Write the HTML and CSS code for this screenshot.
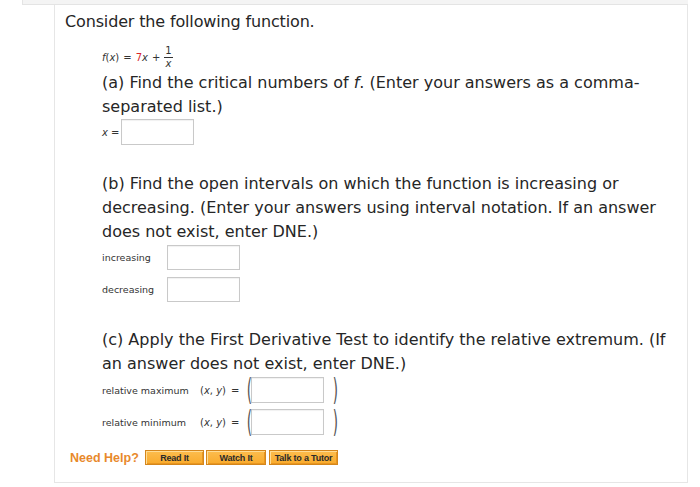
FILE: index.html
```html
<!DOCTYPE html>
<html>
<head>
<meta charset="utf-8">
<link rel="stylesheet" href="styles.css">
</head>
<body>
<div class="prev-strip"></div>
<div class="panel">
  <div class="intro">Consider the following function.</div>
  <div class="sub formula"><span class="it">f</span>(<span class="it">x</span>)<span class="op">=</span><span class="red">7</span><span class="it">x</span><span class="op">+</span><span class="frac"><span class="num">1</span><span class="den it">x</span></span></div>
  <p class="sub q q-a">(a) Find the critical numbers of <span class="it">f</span>. (Enter your answers as a comma-<br>separated list.)</p>
  <div class="sub row">
    <span class="var"><span class="it">x</span> =</span>
    <span class="box"></span>
  </div>

  <p class="sub q q-b">(b) Find the open intervals on which the function is increasing or<br>decreasing. (Enter your answers using interval notation. If an answer<br>does not exist, enter DNE.)</p>
  <div class="sub row row-inc">
    <span class="lbl lbl-int">increasing</span>
    <span class="box box-int"></span>
  </div>
  <div class="sub row row-dec">
    <span class="lbl lbl-int">decreasing</span>
    <span class="box box-int"></span>
  </div>

  <p class="sub q q-c">(c) Apply the First Derivative Test to identify the relative extremum. (If<br>an answer does not exist, enter DNE.)</p>
  <div class="sub row row-max">
    <span class="lbl lbl-ext">relative maximum</span>
    <span class="xy">(<span class="it">x</span>, <span class="it">y</span>)<span class="eq">=</span></span>
    <span class="paren">(</span>
    <span class="box box-ext"></span>
    <span class="paren paren-r">)</span>
  </div>
  <div class="sub row row-min">
    <span class="lbl lbl-ext">relative minimum</span>
    <span class="xy">(<span class="it">x</span>, <span class="it">y</span>)<span class="eq">=</span></span>
    <span class="paren">(</span>
    <span class="box box-ext"></span>
    <span class="paren paren-r">)</span>
  </div>

  <div class="help">
    <span class="need">Need Help?</span>
    <span class="btn btn-read">Read It</span>
    <span class="btn btn-watch">Watch It</span>
    <span class="btn btn-tutor">Talk to a Tutor</span>
  </div>
</div>
</body>
</html>
```

FILE: styles.css
```css
html, body {
  margin: 0;
  padding: 0;
  background: #ffffff;
}
body {
  font-family: "DejaVu Sans", Verdana, sans-serif;
  color: #262626;
}
.prev-strip {
  margin-left: 22px;
  width: 665px;
  height: 4px;
  background: #f4f4f4;
  border-left: 1px solid #e4e4e4;
  border-bottom: 1px solid #e4e4e4;
}
.panel {
  margin-left: 54px;
  width: 622px;
  border-left: 1px solid #e6e6e6;
  border-right: 1px solid #e6e6e6;
  border-bottom: 1px solid #e6e6e6;
  padding: 5px 0 17px 10px;
}
.intro {
  font-size: 16px;
  line-height: 24px;
  letter-spacing: -0.15px;
}
.sub {
  margin-left: 37px;
}
.it { font-style: italic; }
.red { color: #d8262b; }
.formula {
  margin-top: 11px;
  height: 24px;
  display: flex;
  align-items: center;
  font-size: 10px;
  color: #333;
}
.op {
  margin: 0 4px;
}
.frac {
  display: inline-flex;
  flex-direction: column;
  align-items: center;
  line-height: 10px;
}
.frac .num {
  border-bottom: 1px solid #333;
  padding: 0 1px 1px;
}
.frac .den {
  padding-top: 1px;
}
.q {
  font-size: 16px;
  line-height: 24px;
  margin-top: 2px;
  margin-bottom: 0;
  white-space: nowrap;
}
.q-b { margin-top: 27px; }
.q-c { margin-top: 26px; }
.row {
  display: flex;
  align-items: center;
  height: 26px;
}
.var {
  font-size: 10px;
  width: 19px;
  color: #333;
}
.box {
  display: block;
  width: 71px;
  height: 24px;
  border: 1px solid #c9c9c9;
  box-shadow: inset 0 1px 1px rgba(0,0,0,0.06);
  background: #fff;
}
.row-inc { margin-top: 1px; height: 25px; }
.row-dec { margin-top: 7px; height: 25px; }
.box-int { height: 23px; }
.lbl {
  font-size: 9.5px;
  color: #333;
}
.lbl-int { width: 65px; }
.lbl-ext { width: 98px; }
.xy {
  font-size: 10px;
  color: #333;
  width: 45px;
  white-space: nowrap;
}
.eq { margin-left: 5px; }
.row-max { margin-top: 1px; }
.row-min { margin-top: 6px; }
.paren {
  font-family: "DejaVu Sans", sans-serif;
  font-size: 30px;
  color: #555;
  line-height: 26px;
  transform: scaleX(0.45);
  width: 6px;
  display: inline-block;
  text-align: center;
}
.paren-r { margin-left: 7px; }
.help {
  display: flex;
  align-items: center;
  margin-top: 15px;
  margin-left: 5px;
  height: 15px;
}
.need {
  font-family: "Liberation Sans", Arial, sans-serif;
  font-weight: bold;
  font-size: 12.5px;
  color: #e8892b;
  width: 75px;
}
.btn {
  display: flex;
  align-items: center;
  justify-content: center;
  box-sizing: border-box;
  height: 15px;
  font-family: "Liberation Sans", Arial, sans-serif;
  font-weight: bold;
  font-size: 9px;
  letter-spacing: -0.2px;
  color: #2a2a2a;
  background: linear-gradient(#fcbd4e, #f9aa2c);
  border: 1px solid #d4861c;
  box-shadow: inset 1px 1px 0 #ffdc94, inset -1px -1px 0 #e8961f;
}
.btn-read { width: 59px; }
.btn-watch { width: 60px; margin-left: 2px; }
.btn-tutor { width: 69px; margin-left: 3px; }
```
